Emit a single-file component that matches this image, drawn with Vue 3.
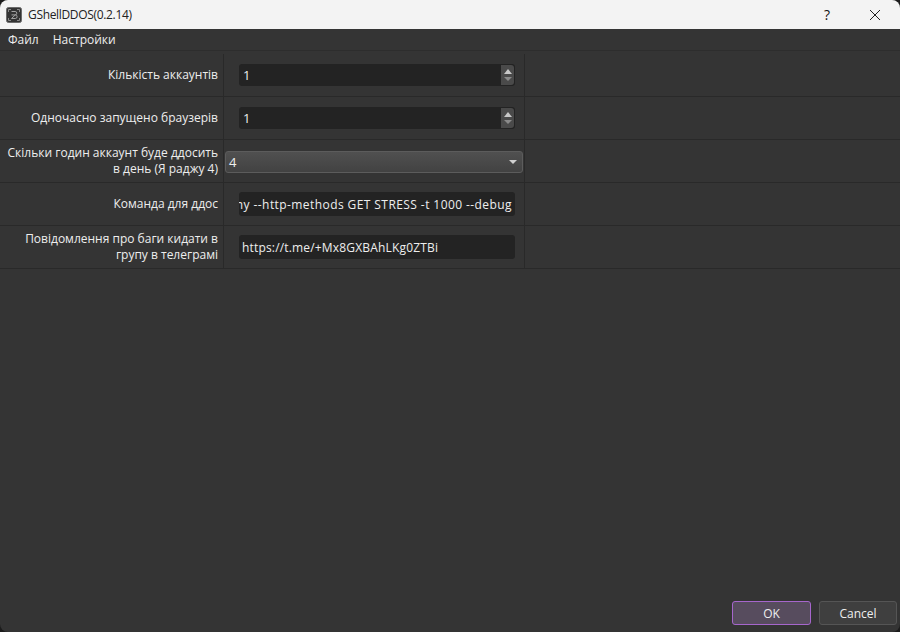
<script setup>
const rows = [
  { label: 'Кількість аккаунтів', kind: 'spin', value: '1' },
  { label: 'Одночасно запущено браузерів', kind: 'spin', value: '1' },
  { label: 'Скільки годин аккаунт буде ддосить в день (Я раджу 4)', kind: 'combo', value: '4' },
  { label: 'Команда для ддос', kind: 'clip', value: 'any --http-methods GET STRESS -t 1000 --debug' },
  { label: 'Повідомлення про баги кидати в групу в телеграмі', kind: 'text', value: 'https://t.me/+Mx8GXBAhLKg0ZTBi' },
]
</script>

<template>
  <div class="window">
    <header class="titlebar">
      <svg class="appicon" width="16" height="16" viewBox="0 0 16 16">
        <rect x="0.5" y="0.5" width="15" height="15" rx="2" fill="#333333" stroke="#6a6a6a" />
        <path d="M2.5 5V2.5H5M11 2.5h2.5V5M13.5 11v2.5H11M5 13.5H2.5V11" fill="none" stroke="#8a8a8a" />
        <path d="M5.5 4.5h3.6a1.6 1.6 0 0 1 0 3.4H5.5m3.8 0a1.8 1.8 0 0 1 0 3.6H5.5z" fill="none" stroke="#a0a0a0" />
      </svg>
      <span class="title">GShellDDOS(0.2.14)</span>
      <span class="help">?</span>
      <svg class="close" width="12" height="12" viewBox="0 0 12 12">
        <path d="M1 1l10 10M11 1L1 11" stroke="#222" stroke-width="1" fill="none" />
      </svg>
    </header>
    <nav class="menubar">
      <span>Файл</span>
      <span>Настройки</span>
    </nav>
    <main class="content">
      <section class="table">
        <div v-for="row in rows" :key="row.label" class="row">
          <div class="label">{{ row.label }}</div>
          <div class="field">
            <div v-if="row.kind === 'spin'" class="input spin">
              <span class="val">{{ row.value }}</span>
              <span class="stepper">
                <i class="up"></i>
                <i class="down"></i>
              </span>
            </div>
            <div v-else-if="row.kind === 'combo'" class="combo">
              <span>{{ row.value }}</span>
              <i class="arrow"></i>
            </div>
            <div v-else class="input line" :class="{ clip: row.kind === 'clip' }">
              <span class="val">{{ row.value }}</span>
            </div>
          </div>
          <div class="rest"></div>
        </div>
      </section>
      <footer class="buttons">
        <button class="btn ok">OK</button>
        <button class="btn cancel">Cancel</button>
      </footer>
    </main>
  </div>
</template>

<style>
html, body { margin: 0; background: #1c1c1c; }
</style>

<style scoped>
.window {
  width: 900px;
  height: 632px;
  display: flex;
  flex-direction: column;
  background: #343434;
  border-radius: 8px;
  overflow: hidden;
  font-family: "Open Sans", "Noto Sans", sans-serif;
  font-size: 12px;
  color: #eeeeee;
}
.titlebar {
  height: 29px;
  flex: none;
  display: flex;
  align-items: center;
  background: #f3f3f3;
  padding-left: 6px;
  color: #222;
}
.appicon { flex: none; }
.title { margin-left: 6px; flex: 1; font-size: 12px; letter-spacing: -0.33px; }
.help { font-size: 14px; width: 8px; margin-right: 37px; color: #111; }
.close { margin-right: 19px; }
.menubar {
  height: 21px;
  flex: none;
  display: flex;
  align-items: center;
  gap: 14px;
  padding-left: 8px;
  border-bottom: 1px solid #2d2d2d;
}
.content {
  flex: 1;
  display: flex;
  flex-direction: column;
  padding-top: 3px;
}
.table { flex: 1; }
.row {
  display: grid;
  grid-template-columns: 224px 301px 1fr;
  height: 43px;
  box-sizing: border-box;
  border-bottom: 1px solid #292929;
}
.label {
  box-sizing: border-box;
  border-right: 1px solid #292929;
  padding: 0 5px;
  display: flex;
  align-items: center;
  justify-content: flex-end;
  text-align: right;
  line-height: 16px;
}
.field {
  border-right: 1px solid #292929;
  display: flex;
  align-items: center;
  padding-left: 15px;
  padding-right: 9px;
}
.input {
  flex: 1;
  height: 22px;
  display: flex;
  align-items: center;
  background: #232323;
  border-radius: 3px;
  padding-left: 4px;
  overflow: hidden;
}
.spin .val { font-size: 13px; }
.line { height: 24px; padding-left: 3px; padding-right: 3px; letter-spacing: 0.17px; }
.clip { justify-content: flex-end; white-space: nowrap; letter-spacing: 0.42px; }
.stepper {
  margin-left: auto;
  margin-right: 1px;
  box-sizing: border-box;
  width: 13px;
  height: 20px;
  background: #4a4a4a;
  border-radius: 0 3px 3px 0;
  display: flex;
  flex-direction: column;
  align-items: center;
  justify-content: center;
  gap: 3px;
}
.up, .down { width: 0; height: 0; border-left: 4px solid transparent; border-right: 4px solid transparent; }
.up { border-bottom: 5px solid #c8c8c8; }
.down { border-top: 4px solid #8a8a8a; }
.combo {
  flex: 1;
  margin-left: -14px;
  margin-right: -8px;
  margin-top: 1px;
  height: 22px;
  display: flex;
  align-items: center;
  justify-content: space-between;
  box-sizing: border-box;
  padding: 0 5px 0 3px;
  border: 1px solid #5c5c5c;
  border-radius: 3px;
  background: linear-gradient(#505050, #424242);
  font-size: 13px;
}
.arrow {
  width: 0;
  height: 0;
  border-left: 4px solid transparent;
  border-right: 4px solid transparent;
  border-top: 4px solid #d0d0d0;
}
.buttons {
  height: 31px;
  flex: none;
  display: flex;
  justify-content: flex-end;
  gap: 8px;
  padding-right: 3px;
}
.btn {
  width: 79px;
  height: 24px;
  font: inherit;
  color: #eeeeee;
  background: #3f3f3f;
  border: 1px solid #555;
  border-radius: 3px;
  padding: 0;
}
.cancel { width: 78px; }
.ok {
  background: #574c5e;
  border-color: #a666cc;
}
</style>
